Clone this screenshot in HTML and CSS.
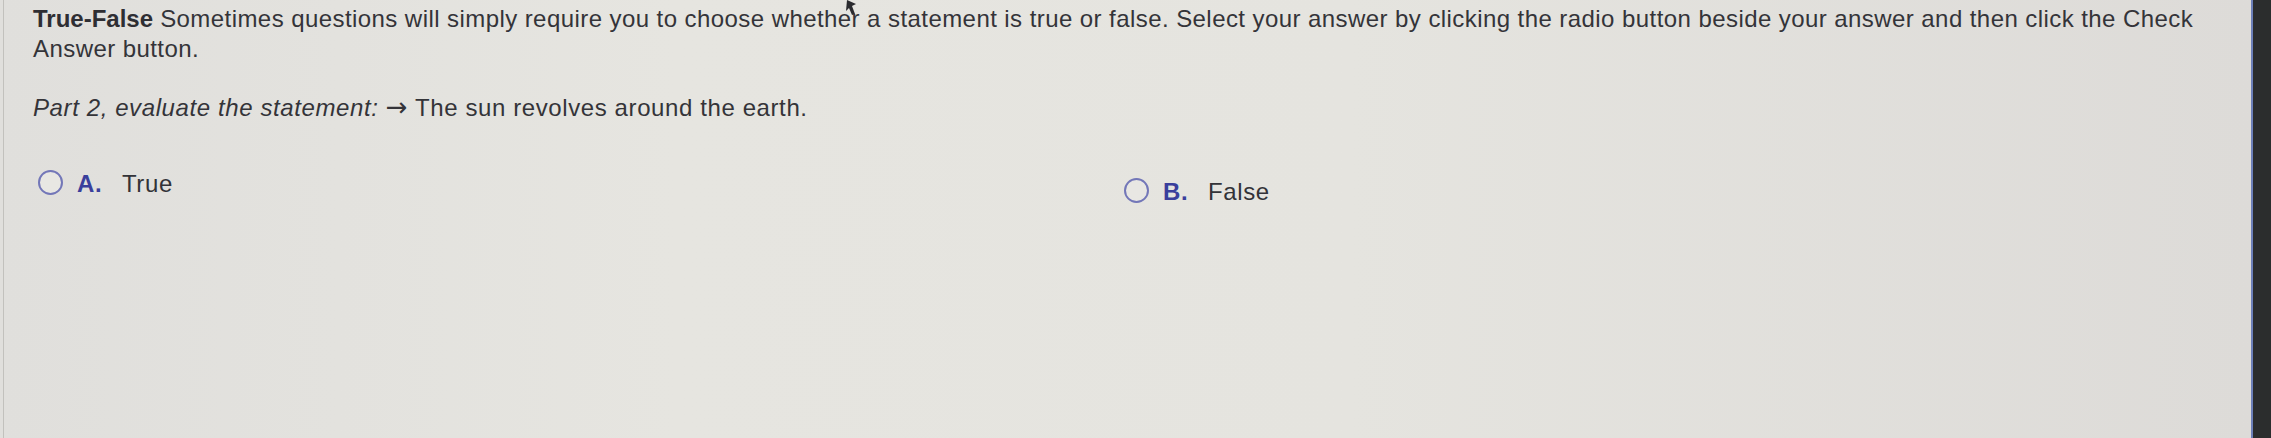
FILE: index.html
```html
<!DOCTYPE html>
<html lang="en">
<head>
    <meta charset="UTF-8">
    <title>True-False Question</title>
    <link rel="stylesheet" href="styles.css">
</head>
<body>
    <div class="screen">
        <div class="question">
            <p class="intro">
                <span class="line"><b class="kind">True-False</b> <span>Sometimes questions will simply require you to choose whether a statement is true or false. Select your answer by clicking the radio button beside your answer and then click the Check</span></span>
                <span class="line">Answer button.</span>
            </p>
            <p class="prompt"><i>Part 2, evaluate the statement:</i> <span class="arrow">&rarr;</span> <span>The sun revolves around the earth.</span></p>

            <div class="choices">
                <label class="choice">
                    <span class="radio"></span>
                    <span class="letter">A.</span>
                    <span class="answer">True</span>
                </label>
                <label class="choice choice-b">
                    <span class="radio"></span>
                    <span class="letter">B.</span>
                    <span class="answer">False</span>
                </label>
            </div>
        </div>

        <!-- mouse pointer caught in the photo -->
        <svg class="pointer" width="18" height="20" viewBox="0 0 18 20">
            <path d="M3 0 L12 4 L8 6 L11 14 L8 15 L5 8 L2 11 Z" fill="#2a2a2e"/>
        </svg>
    </div>
    <div class="bezel"></div>
</body>
</html>
```

FILE: styles.css
```css
* {
    margin: 0;
    padding: 0;
    box-sizing: border-box;
}

html, body {
    height: 100%;
}

body {
    display: flex;
    font-family: 'Liberation Sans', Arial, sans-serif;
    font-size: 24px;
    line-height: 30px;
    letter-spacing: 0.6px;
    color: #343439;
    background: #2c2e2e;
    overflow: hidden;
}

.screen {
    position: relative;
    flex: 1;
    padding-left: 3px;
    background: linear-gradient(90deg, #e0dfdc 0%, #e6e5e0 30%, #e5e4df 60%, #dddbd8 100%);
}

.question {
    height: 100%;
    padding: 4px 0 0 29px;
    border-left: 1px solid #c2c1bd;
}

.intro {
    letter-spacing: 0.43px;
    white-space: nowrap;
}

.intro .line {
    display: block;
}

.kind {
    color: #2e2e33;
    letter-spacing: 0;
}

.prompt {
    margin-top: 28px;
}

.arrow {
    font-family: 'DejaVu Sans', sans-serif;
    font-size: 26px;
}

.choices {
    display: grid;
    grid-template-columns: 1086px 1fr;
    margin-top: 46px;
    padding-left: 5px;
}

.choice {
    display: flex;
    align-items: center;
    height: 30px;
}

.choice-b {
    margin-top: 8px;
}

.radio {
    width: 25px;
    height: 25px;
    border: 2px solid #7377b8;
    border-radius: 50%;
    margin-top: -4px;
    background: #e8e7e3;
}

.letter {
    width: 45px;
    margin-left: 14px;
    font-weight: bold;
    color: #3a3f9c;
}

.answer {
    color: #333338;
}

.pointer {
    position: absolute;
    left: 844px;
    top: 0;
}

.bezel {
    width: 20px;
    border-left: 2px solid #6c7fb8;
    background: #2b2d2d;
}
```
